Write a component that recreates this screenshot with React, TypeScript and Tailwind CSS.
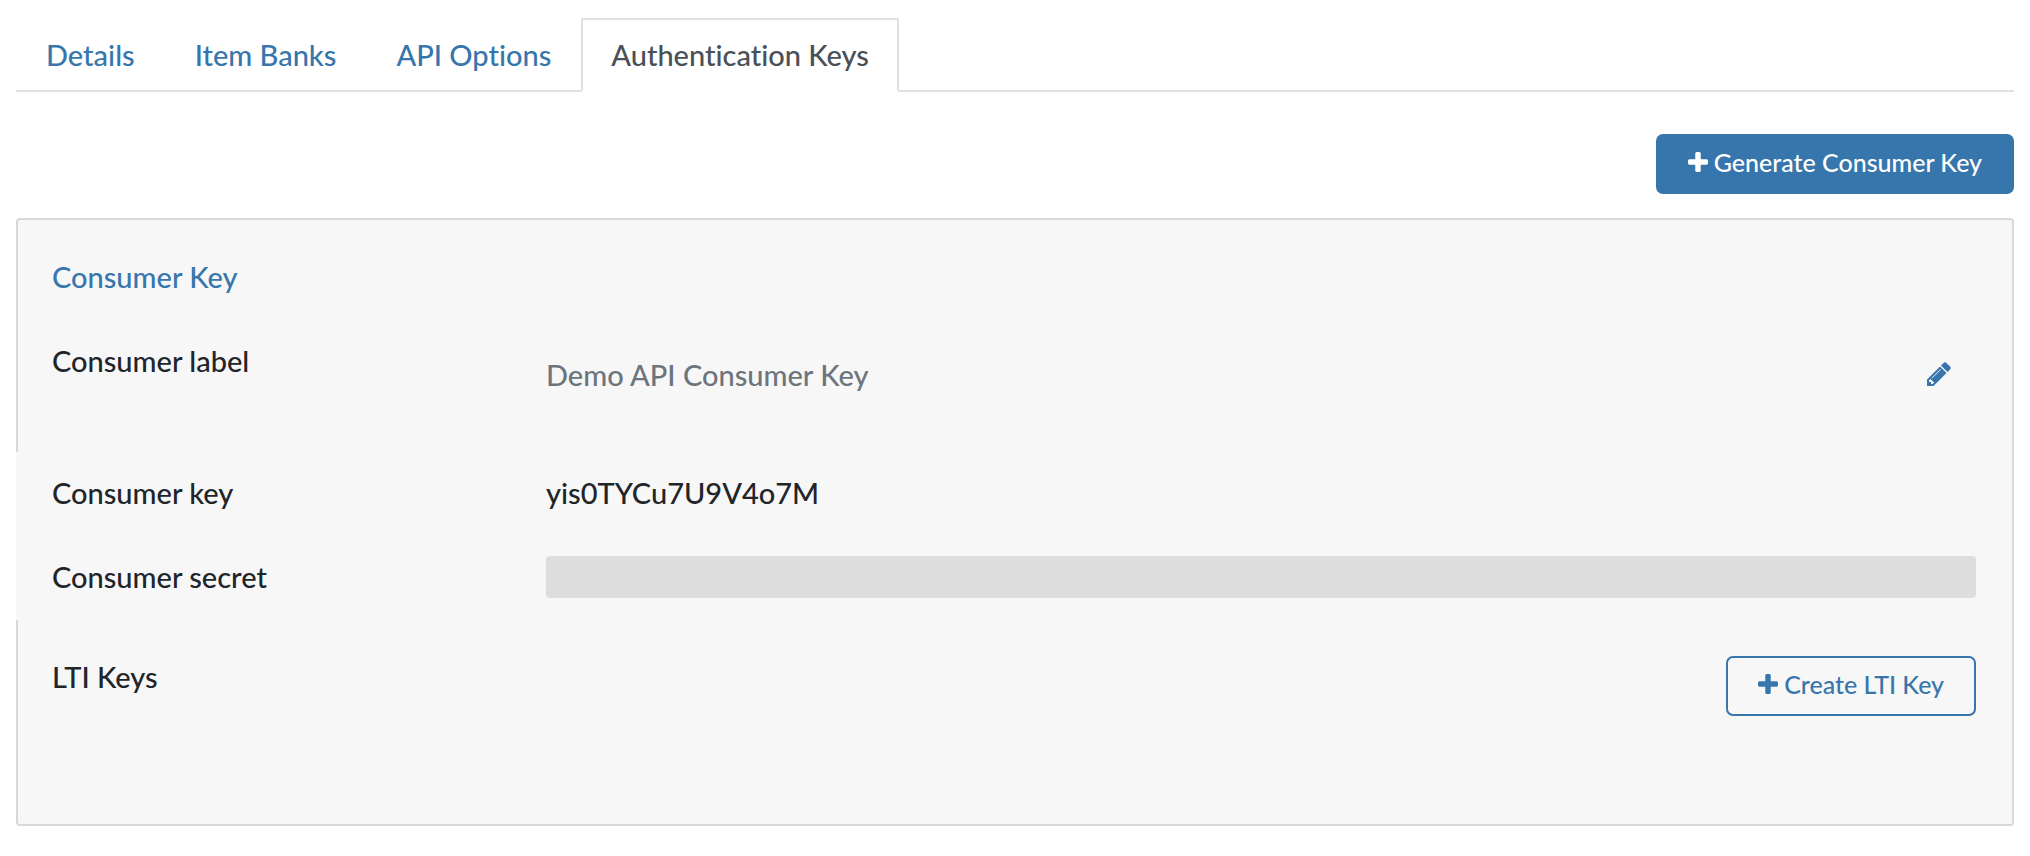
import type { ReactNode } from 'react';
import clsx from 'clsx';

const tabs = [
  { label: 'Details', active: false },
  { label: 'Item Banks', active: false },
  { label: 'API Options', active: false },
  { label: 'Authentication Keys', active: true },
];

function PlusIcon() {
  return (
    <svg viewBox="192 128 1408 1408" className="h-5 w-5 shrink-0 fill-current" aria-hidden="true">
      <path d="M1600 736v192q0 40-28 68t-68 28h-416v416q0 40-28 68t-68 28h-192q-40 0-68-28t-28-68v-416h-416q-40 0-68-28t-28-68v-192q0-40 28-68t68-28h416v-416q0-40 28-68t68-28h192q40 0 68 28t28 68v416h416q40 0 68 28t28 68z" />
    </svg>
  );
}

function PencilIcon() {
  return (
    <svg viewBox="0 0 1792 1792" className="h-7 w-7 fill-current" aria-hidden="true">
      <path d="M491 1536l91-91-235-235-91 91v107h128v128h107zm523-928q0-22-22-22-10 0-17 7l-542 542q-7 7-7 17 0 22 22 22 10 0 17-7l542-542q7-7 7-17zm-54-192l416 416-832 832h-416v-416zm683 96q0 53-37 90l-166 166-416-416 166-165q36-38 90-38 53 0 91 38l235 234q37 39 37 91z" />
    </svg>
  );
}

function Button({ solid, children }: { solid?: boolean; children: ReactNode }) {
  return (
    <button
      type="button"
      className={clsx(
        'flex h-[60px] items-center gap-1.5 rounded-[7px] border-2 border-[#3776ac] px-[30px] pb-1 text-[25px] leading-[39px]',
        solid ? 'bg-[#3776ac] text-white' : 'text-[#3776ac]',
      )}
    >
      <PlusIcon />
      {children}
    </button>
  );
}

function Row({ label, className, children }: { label: string; className: string; children: ReactNode }) {
  return (
    <div className={clsx('grid grid-cols-4 gap-x-[52px] pl-[34px] pr-9', className)}>
      <dt>{label}</dt>
      <dd className="col-span-3">{children}</dd>
    </div>
  );
}

export default function App() {
  return (
    <main className="bg-white px-4 pt-[18px] pb-[30px] font-['Lato',sans-serif] text-[29px] leading-[42px] font-medium text-[#212529] [font-variant-ligatures:none]">
      <nav className="flex border-b-2 border-[#dee2e6]">
        {tabs.map(({ label, active }) => (
          <a
            key={label}
            href="#"
            aria-current={active ? 'page' : undefined}
            className={clsx(
              '-mb-0.5 border-2 px-7 py-3.5',
              active
                ? 'border-[#dee2e6] border-b-white bg-white text-[#495057]'
                : 'border-transparent text-[#3776ac]',
            )}
          >
            {label}
          </a>
        ))}
      </nav>

      <div className="mt-[42px] flex justify-end">
        <Button solid>Generate Consumer Key</Button>
      </div>

      <section className="mt-6 rounded border-2 border-[#d8d8d8] bg-[#f7f7f7] pt-9 pb-[108px]">
        <h2 className="pl-[34px] font-medium text-[#3776ac]">Consumer Key</h2>
        <dl>
          <Row label="Consumer label" className="pt-[42px] pb-14">
            <div className="flex items-center justify-between pt-3.5 pr-[23px]">
              <span className="text-[#6c757d]">Demo API Consumer Key</span>
              <button type="button" aria-label="Edit consumer label" className="pb-0.5 text-[#3776ac]">
                <PencilIcon />
              </button>
            </div>
          </Row>
          {/* these two rows run over the panel's left border */}
          <div className="-ml-0.5 bg-[#f7f7f7] pl-0.5">
            <Row label="Consumer key" className="pt-5 pb-[22px]">
              yis0TYCu7U9V4o7M
            </Row>
            <Row label="Consumer secret" className="pt-5 pb-[22px]">
              <div className="h-[42px] rounded bg-[#ddd]" />
            </Row>
          </div>
          <Row label="LTI Keys" className="pt-9">
            <div className="flex justify-end">
              <Button>Create LTI Key</Button>
            </div>
          </Row>
        </dl>
      </section>
    </main>
  );
}
